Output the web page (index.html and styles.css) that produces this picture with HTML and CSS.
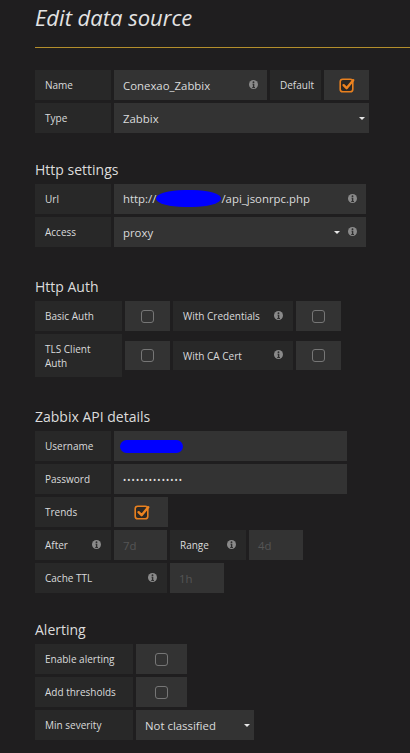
FILE: index.html
```html
<!DOCTYPE html>
<html>
<head>
<meta charset="utf-8">
<link rel="stylesheet" href="styles.css">
</head>
<body>
<div class="page">
  <header class="header">
    <h1 class="title">Edit data source</h1>
  </header>

  <section class="group first">
    <div class="row">
      <div class="label w76">Name</div>
      <div class="field w153"><span class="val">Conexao_Zabbix</span><svg class="info" viewBox="0 0 9 9"><circle cx="4.5" cy="4.5" r="4.5"/><circle class="ii" cx="4.5" cy="2.3" r="0.95"/><path class="ii" d="M3.4 3.7h1.9v3.3h0.7v0.9h-2.8v-0.9h0.7v-2.4h-0.5z"/></svg></div>
      <div class="label w51">Default</div>
      <div class="cell w45"><svg class="chk-on" viewBox="0 0 17 17"><rect x="1.2" y="3.2" width="12.6" height="12.6" rx="2.6"/><path d="M4.6 9.2l3 3 6.6-8"/></svg></div>
    </div>
    <div class="row">
      <div class="label w76">Type</div>
      <div class="field w255"><span class="val">Zabbix</span><span class="caret"></span></div>
    </div>
  </section>

  <section class="group">
    <h2 class="heading">Http settings</h2>
    <div class="row">
      <div class="label w76">Url</div>
      <div class="field w252"><span class="val">http://<span class="blob url-blob"></span>/api_jsonrpc.php</span><svg class="info" viewBox="0 0 9 9"><circle cx="4.5" cy="4.5" r="4.5"/><circle class="ii" cx="4.5" cy="2.3" r="0.95"/><path class="ii" d="M3.4 3.7h1.9v3.3h0.7v0.9h-2.8v-0.9h0.7v-2.4h-0.5z"/></svg></div>
    </div>
    <div class="row">
      <div class="label w76">Access</div>
      <div class="field w252"><span class="val">proxy</span><span class="tail"><span class="caret"></span><svg class="info" viewBox="0 0 9 9"><circle cx="4.5" cy="4.5" r="4.5"/><circle class="ii" cx="4.5" cy="2.3" r="0.95"/><path class="ii" d="M3.4 3.7h1.9v3.3h0.7v0.9h-2.8v-0.9h0.7v-2.4h-0.5z"/></svg></span></div>
    </div>
  </section>

  <section class="group loose">
    <h2 class="heading">Http Auth</h2>
    <div class="row">
      <div class="label w87">Basic Auth</div>
      <div class="cell w45"><span class="chk-off"></span></div>
      <div class="label w120">With Credentials<svg class="info" viewBox="0 0 9 9"><circle cx="4.5" cy="4.5" r="4.5"/><circle class="ii" cx="4.5" cy="2.3" r="0.95"/><path class="ii" d="M3.4 3.7h1.9v3.3h0.7v0.9h-2.8v-0.9h0.7v-2.4h-0.5z"/></svg></div>
      <div class="cell w45"><span class="chk-off"></span></div>
    </div>
    <div class="row">
      <div class="label w87 tall">TLS Client Auth</div>
      <div class="cell w45 short"><span class="chk-off"></span></div>
      <div class="label w120 short">With CA Cert<svg class="info" viewBox="0 0 9 9"><circle cx="4.5" cy="4.5" r="4.5"/><circle class="ii" cx="4.5" cy="2.3" r="0.95"/><path class="ii" d="M3.4 3.7h1.9v3.3h0.7v0.9h-2.8v-0.9h0.7v-2.4h-0.5z"/></svg></div>
      <div class="cell w45 short"><span class="chk-off"></span></div>
    </div>
  </section>

  <section class="group loose">
    <h2 class="heading">Zabbix API details</h2>
    <div class="row">
      <div class="label w76">Username</div>
      <div class="field w233"><span class="blob user-blob"></span></div>
    </div>
    <div class="row">
      <div class="label w76">Password</div>
      <div class="field w233"><span class="dots">••••••••••••••</span></div>
    </div>
    <div class="row">
      <div class="label w76">Trends</div>
      <div class="cell w54"><svg class="chk-on" viewBox="0 0 17 17"><rect x="1.2" y="3.2" width="12.6" height="12.6" rx="2.6"/><path d="M4.6 9.2l3 3 6.6-8"/></svg></div>
    </div>
    <div class="row">
      <div class="label w76">After<svg class="info" viewBox="0 0 9 9"><circle cx="4.5" cy="4.5" r="4.5"/><circle class="ii" cx="4.5" cy="2.3" r="0.95"/><path class="ii" d="M3.4 3.7h1.9v3.3h0.7v0.9h-2.8v-0.9h0.7v-2.4h-0.5z"/></svg></div>
      <div class="field w53"><span class="ph">7d</span></div>
      <div class="label w76">Range<svg class="info" viewBox="0 0 9 9"><circle cx="4.5" cy="4.5" r="4.5"/><circle class="ii" cx="4.5" cy="2.3" r="0.95"/><path class="ii" d="M3.4 3.7h1.9v3.3h0.7v0.9h-2.8v-0.9h0.7v-2.4h-0.5z"/></svg></div>
      <div class="field w54"><span class="ph">4d</span></div>
    </div>
    <div class="row">
      <div class="label w132">Cache TTL<svg class="info" viewBox="0 0 9 9"><circle cx="4.5" cy="4.5" r="4.5"/><circle class="ii" cx="4.5" cy="2.3" r="0.95"/><path class="ii" d="M3.4 3.7h1.9v3.3h0.7v0.9h-2.8v-0.9h0.7v-2.4h-0.5z"/></svg></div>
      <div class="field w54"><span class="ph">1h</span></div>
    </div>
  </section>

  <section class="group">
    <h2 class="heading">Alerting</h2>
    <div class="row">
      <div class="label w98">Enable alerting</div>
      <div class="cell w51"><span class="chk-off"></span></div>
    </div>
    <div class="row">
      <div class="label w98">Add thresholds</div>
      <div class="cell w51"><span class="chk-off"></span></div>
    </div>
    <div class="row">
      <div class="label w98">Min severity</div>
      <div class="field w118 sel"><span class="val">Not classified</span><span class="caret"></span></div>
    </div>
  </section>
</div>
</body>
</html>
```

FILE: styles.css
```css
html, body {
  margin: 0;
  padding: 0;
  background: #1f1e1f;
}
body {
  font-family: "Open Sans", "DejaVu Sans", sans-serif;
  color: #d8d9da;
  overflow: hidden;
}
.page {
  padding-left: 35px;
}
.header {
  padding-top: 4px;
  padding-bottom: 17px;
  border-bottom: 1px solid #b38f2c;
  margin-bottom: 22px;
}
.title {
  margin: 0;
  font-size: 22px;
  line-height: 26px;
  font-style: italic;
  font-weight: 400;
  color: #e3e3e3;
}
.group {
  display: flex;
  flex-direction: column;
  gap: 3px;
  margin-top: 28px;
}
.group.first {
  margin-top: 0;
}
.group.loose {
  margin-top: 31px;
}
.heading {
  margin: 0 0 3px 0;
  font-size: 14px;
  line-height: 17px;
  font-weight: 400;
  color: #dcdcdc;
}
.row {
  display: flex;
  align-items: center;
  gap: 3px;
}
.label {
  box-sizing: border-box;
  height: 30px;
  background: #282828;
  display: flex;
  align-items: center;
  justify-content: space-between;
  padding: 0 10px;
  font-size: 10px;
  color: #dadbdc;
}
.label.tall {
  height: 43px;
  line-height: 14px;
  padding-right: 18px;
}
.short {
  height: 29px !important;
}
.field {
  box-sizing: border-box;
  height: 30px;
  background: #333333;
  display: flex;
  align-items: center;
  justify-content: space-between;
  padding: 0 9px;
  font-size: 11.4px;
  color: #dadbdc;
  white-space: nowrap;
}
.field.sel {
  padding-right: 4px;
}
.tail {
  display: flex;
  align-items: center;
  gap: 8px;
}
.cell {
  box-sizing: border-box;
  height: 30px;
  background: #333333;
  display: flex;
  align-items: center;
  justify-content: center;
}
.w45 { width: 45px; }
.w51 { width: 51px; }
.w53 { width: 53px; }
.w54 { width: 54px; }
.w76 { width: 76px; }
.w87 { width: 87px; }
.w98 { width: 98px; }
.w118 { width: 118px; }
.w120 { width: 120px; }
.w132 { width: 132px; }
.w153 { width: 153px; }
.w233 { width: 233px; }
.w252 { width: 252px; }
.w255 { width: 255px; }

.info {
  width: 9px;
  height: 9px;
  flex: none;
  fill: #8a8a8a;
  margin-top: -2px;
}
.info .ii {
  fill: #2e2e2e;
}
.caret {
  width: 0;
  height: 0;
  border-left: 3px solid transparent;
  border-right: 3px solid transparent;
  border-top: 3.5px solid #e8e8e8;
  flex: none;
}
.field.w255 {
  padding-right: 4px;
}
.chk-off {
  box-sizing: border-box;
  width: 13px;
  height: 13px;
  border: 1.5px solid #767676;
  border-radius: 3px;
}
.chk-on {
  width: 17px;
  height: 17px;
  margin-top: -2px;
  margin-left: 2px;
}
.chk-on rect {
  fill: #2c2824;
  stroke: #e8801f;
  stroke-width: 1.6;
}
.chk-on path {
  fill: none;
  stroke: #ee8420;
  stroke-width: 2.4;
  stroke-linecap: round;
  stroke-linejoin: round;
}
.blob {
  display: inline-block;
  background: #0000ff;
  vertical-align: middle;
}
.url-blob {
  width: 65px;
  height: 17px;
  border-radius: 30px / 9px;
  margin-top: -1px;
}
.user-blob {
  width: 63px;
  height: 13px;
  border-radius: 7px;
  margin-left: -3px;
}
.dots {
  font-size: 8.5px;
  letter-spacing: 1.1px;
  color: #e6e6e6;
}
.ph {
  color: #555555;
}
```
